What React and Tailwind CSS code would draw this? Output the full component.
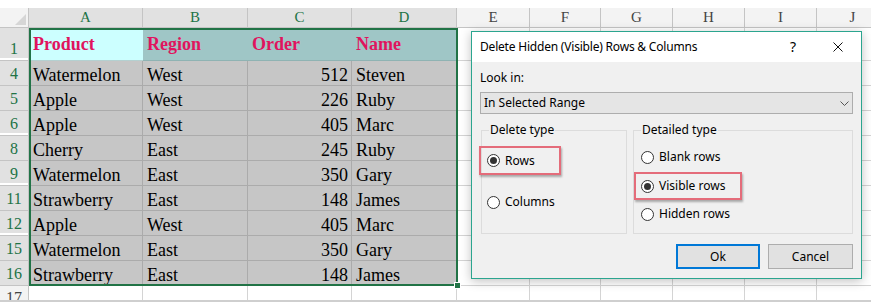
import React from 'react';

const serif = "font-['Liberation_Serif',serif]";
const ui = "font-['Noto_Sans',sans-serif]";

const cols = [
  { w: 'w-[114px]', label: 'A', sel: true },
  { w: 'w-[105px]', label: 'B', sel: true },
  { w: 'w-[104px]', label: 'C', sel: true, right: true },
  { w: 'w-[105px]', label: 'D', sel: true },
  { w: 'w-[73px]', label: 'E' },
  { w: 'w-[71px]', label: 'F' },
  { w: 'w-[72px]', label: 'G' },
  { w: 'w-[72px]', label: 'H' },
  { w: 'w-[72px]', label: 'I' },
  { w: 'w-[72px]', label: 'J' },
];

// row number, cells, and whether hidden rows follow (double line in the row header)
const rows = [
  ['4', ['Watermelon', 'West', '512', 'Steven'], false],
  ['5', ['Apple', 'West', '226', 'Ruby'], false],
  ['6', ['Apple', 'West', '405', 'Marc'], true],
  ['8', ['Cherry', 'East', '245', 'Ruby'], false],
  ['9', ['Watermelon', 'East', '350', 'Gary'], true],
  ['11', ['Strawberry', 'East', '148', 'James'], false],
  ['12', ['Apple', 'West', '405', 'Marc'], true],
  ['15', ['Watermelon', 'East', '350', 'Gary'], false],
  ['16', ['Strawberry', 'East', '148', 'James'], false],
];

function RowHead({ n, gap, h }) {
  return (
    <div
      className={`w-[29px] shrink-0 ${h} flex items-end justify-center pb-[2px] text-[16px] leading-[18px] border-r border-b border-[#c4c4c4] bg-[#e1e1e1] text-[#217346] ${
        gap ? 'shadow-[inset_0_-2px_0_#ffffff]' : ''
      }`}
    >
      {n}
    </div>
  );
}

function Radio({ checked }) {
  return (
    <span className="w-[13px] h-[13px] shrink-0 rounded-full border border-[#333] bg-white flex items-center justify-center">
      {checked && <span className="w-[7px] h-[7px] rounded-full bg-[#333]" />}
    </span>
  );
}

function Option({ label, checked, className }) {
  return (
    <div className={`flex items-center gap-[5px] h-[16px] ${className}`}>
      <Radio checked={checked} />
      <span className="leading-[16px]">{label}</span>
    </div>
  );
}

function GroupBox({ title, className, children }) {
  return (
    <div className={`relative h-[104px] border border-[#dcdcdc] ${className}`}>
      <span className="absolute left-[7px] -top-[9px] px-[1px] bg-[#f0f0f0] leading-[16px]">{title}</span>
      {children}
    </div>
  );
}

function Dialog() {
  return (
    <div className={`absolute left-[471px] top-[31px] w-[391px] h-[248px] border border-[#2ba58f] bg-[#f0f0f0] shadow-[0_2px_10px_rgba(0,0,0,0.25)] flex flex-col text-[12px] text-black ${ui}`}>
      {/* title bar */}
      <div className="h-[30px] bg-white flex items-center pl-[8px]">
        <span className="tracking-[-0.2px]">Delete Hidden (Visible) Rows &amp; Columns</span>
        <span className="ml-auto text-[14px] leading-none">?</span>
        <svg className="ml-[37px] mr-[18px]" width="10" height="10" viewBox="0 0 10 10">
          <path d="M0.5 0.5 L9.5 9.5 M9.5 0.5 L0.5 9.5" stroke="#111" strokeWidth="1" />
        </svg>
      </div>

      <div className="flex-1 px-[8px] pt-[8px]">
        <div className="h-[16px] leading-[16px]">Look in:</div>
        <div className="mt-[6px] h-[22px] border border-[#adadad] bg-[#e5e5e5] flex items-center justify-between pl-[3px] pr-[3px]">
          <span>In Selected Range</span>
          <svg width="9" height="5" viewBox="0 0 9 5">
            <path d="M0.5 0.5 L4.5 4.5 L8.5 0.5" fill="none" stroke="#555" strokeWidth="1" />
          </svg>
        </div>

        <div className="mt-[16px] flex gap-[6px] pl-[1px]">
          <GroupBox title="Delete type" className="w-[146px]">
            <div className="-ml-[3px] mt-[15px] w-[82px] h-[29px] border-2 border-[#e46c7a] shadow-[1px_2px_2px_rgba(0,0,0,0.3)] flex items-center pl-[6px]">
              <Option label="Rows" checked />
            </div>
            <Option label="Columns" className="mt-[19px] pl-[5px]" />
          </GroupBox>
          <GroupBox title="Detailed type" className="w-[220px]">
            <Option label="Blank rows" className="mt-[18px] pl-[7px]" />
            <div className="mt-[7px] w-[108px] h-[28px] border-2 border-[#e46c7a] shadow-[1px_2px_2px_rgba(0,0,0,0.3)] flex items-center pl-[5px]">
              <Option label="Visible rows" checked />
            </div>
            <Option label="Hidden rows" className="mt-[6px] pl-[7px]" />
          </GroupBox>
        </div>

        <div className="mt-[10px] flex justify-end gap-[8px]">
          <button className="w-[84px] h-[25px] border-2 border-[#0078d7] bg-[#e1e1e1]">Ok</button>
          <button className="w-[85px] h-[25px] border border-[#adadad] bg-[#e1e1e1]">Cancel</button>
        </div>
      </div>
    </div>
  );
}

export default function App() {
  return (
    <div className={`relative w-[871px] h-[302px] overflow-hidden bg-white ${serif}`}>
      <div className="h-[8px]" />

      {/* column headers */}
      <div className="flex h-[20px]">
        <div className="w-[29px] shrink-0 bg-[#f3f3f3] border-r border-b border-[#c4c4c4] flex items-end justify-end p-[2px]">
          <svg width="11" height="11" viewBox="0 0 11 11">
            <path d="M11 0 L11 11 L0 11 Z" fill="#d6d6d6" />
          </svg>
        </div>
        {cols.map((c) => (
          <div
            key={c.label}
            className={`${c.w} shrink-0 flex items-center justify-center text-[15px] border-r border-b border-[#c4c4c4] ${
              c.sel ? 'bg-[#e1e1e1] text-[#217346]' : 'bg-[#f3f3f3] text-[#444]'
            }`}
          >
            {c.label}
          </div>
        ))}
      </div>

      {/* row 1: header titles */}
      <div className="flex h-[33px]">
        <RowHead n="1" gap h="h-[33px]" />
        {['Product', 'Region', 'Order', 'Name'].map((t, i) => (
          <div
            key={t}
            className={`${cols[i].w} shrink-0 flex items-center pl-[4px] text-[18px] font-bold text-[#e0145e] border-b ${
              i === 0 ? 'bg-[#ccffff] border-[#b4d0d0]' : 'bg-[#9fc6c6] border-[#8fb3b3]'
            }`}
          >
            {t}
          </div>
        ))}
        {cols.slice(4).map((c) => (
          <div key={c.label} className={`${c.w} shrink-0 border-r border-b border-[#d4d4d4]`} />
        ))}
      </div>

      {rows.map(([n, cells, gap]) => (
        <div key={n} className="flex h-[25px]">
          <RowHead n={n} gap={gap} h="h-[25px]" />
          {cells.map((t, i) => (
            <div
              key={i}
              className={`${cols[i].w} shrink-0 flex items-end text-[18px] leading-[20px] bg-[#c6c6c6] border-r border-b border-[#ababab] ${
                cols[i].right ? 'justify-end pr-[3px]' : 'pl-[4px]'
              }`}
            >
              {t}
            </div>
          ))}
          {cols.slice(4).map((c) => (
            <div key={c.label} className={`${c.w} shrink-0 border-r border-b border-[#d4d4d4]`} />
          ))}
        </div>
      ))}

      {/* row 17, cut off at the bottom */}
      <div className="flex h-[14px]">
        <div className="w-[29px] shrink-0 h-[14px] overflow-hidden flex items-start justify-center pt-[3px] text-[16px] leading-[18px] bg-[#f3f3f3] text-[#444] border-r border-[#c4c4c4]">
          17
        </div>
        {cols.map((c) => (
          <div key={c.label} className={`${c.w} shrink-0 border-r border-[#d4d4d4]`} />
        ))}
      </div>
      <div className="h-[2px] bg-[#cfcfcf]" />

      {/* selection outline and fill handle */}
      <div className="absolute left-[29px] top-[28px] w-[429px] h-[258px] border-2 border-[#217346]" />
      <div className="absolute left-[454px] top-[282px] w-[7px] h-[7px] bg-[#217346] border border-white" />

      <Dialog />
    </div>
  );
}
